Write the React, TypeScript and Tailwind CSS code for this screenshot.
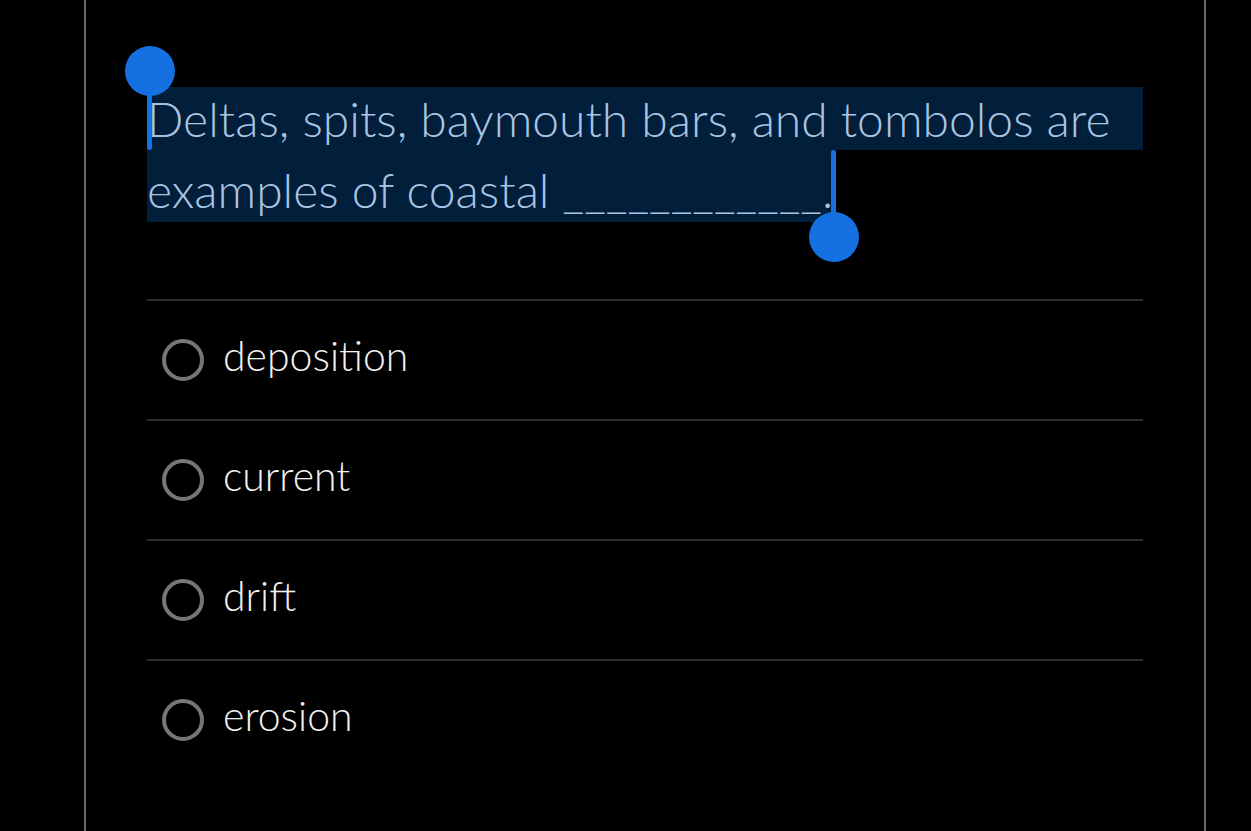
import React from 'react'

const options = ['deposition', 'current', 'drift', 'erosion']

function Handles() {
  return (
    <>
      {/* start handle */}
      <div className="absolute left-[-22px] top-[-41px] h-[50px] w-[50px] rounded-full bg-[#1570e2]" />
      <div className="absolute left-0 top-[-10px] h-[73px] w-[5px] rounded-b-full bg-[#1570e2]" />
      {/* end handle */}
      <div className="absolute left-[684px] top-[63px] h-[80px] w-[5px] rounded-t-full bg-[#1570e2]" />
      <div className="absolute left-[662px] top-[125px] h-[50px] w-[50px] rounded-full bg-[#1570e2]" />
    </>
  )
}

export default function App() {
  return (
    <div className="flex h-[831px] w-full overflow-hidden bg-black" style={{ fontFamily: 'Lato, "Noto Sans", sans-serif' }}>
      <div className="w-[84px] shrink-0" />
      <div className="w-[2px] shrink-0 bg-[#6a6a6a]" />
      <div className="w-[1118px] shrink-0 px-[61px] pt-[87px]">
        <div className="relative">
          <div className="flex h-[63px] items-end bg-[#011e3b]">
            <span className="text-[48px] font-light leading-[63px] text-[#a9c4e2] whitespace-nowrap">
              Deltas, spits, baymouth bars, and tombolos are
            </span>
          </div>
          <div className="flex h-[72px] w-fit items-center bg-[#011e3b]">
            <span className="translate-y-[4px] text-[48px] font-light leading-[72px] text-[#a9c4e2] whitespace-nowrap">
              examples of coastal ____________.
            </span>
          </div>
          <Handles />
        </div>

        <div className="mt-[77px]">
          {options.map((o) => (
            <div key={o} className="flex h-[120px] items-center border-t-2 border-[#2e2e2e] pl-[15px]">
              <div className="h-[42px] w-[42px] shrink-0 rounded-full border-[4px] border-[#767676]" />
              <span className="ml-[19px] -translate-y-[5px] text-[41px] font-light leading-none text-[#f2f2f2]">{o}</span>
            </div>
          ))}
        </div>
      </div>
      <div className="w-[2px] shrink-0 bg-[#6a6a6a]" />
    </div>
  )
}
